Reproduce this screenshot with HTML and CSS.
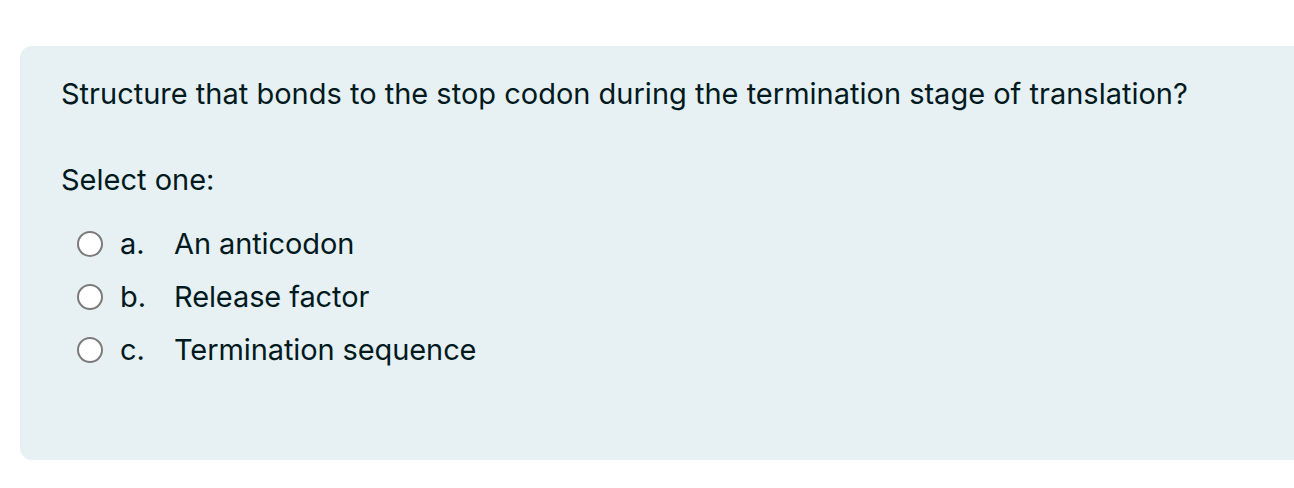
FILE: index.html
```html
<!DOCTYPE html>
<html lang="en">
<head>
    <meta charset="UTF-8">
    <title>Question</title>
    <link rel="stylesheet" href="styles.css">
</head>
<body>
    <div class="formulation">
        <div class="qtext">Structure that bonds to the stop codon during the termination stage of translation?</div>

        <div class="ablock">
            <div class="prompt">Select one:</div>
            <div class="answer">
                <label class="option">
                    <input type="radio" name="q1" value="0">
                    <span class="answernumber">a.</span>
                    <span class="answertext">An anticodon</span>
                </label>
                <label class="option">
                    <input type="radio" name="q1" value="1">
                    <span class="answernumber">b.</span>
                    <span class="answertext">Release factor</span>
                </label>
                <label class="option">
                    <input type="radio" name="q1" value="2">
                    <span class="answernumber">c.</span>
                    <span class="answertext">Termination sequence</span>
                </label>
            </div>
        </div>
    </div>
</body>
</html>
```

FILE: styles.css
```css
body {
    margin: 0;
    background-color: #fff;
    font-family: 'Inter', 'Noto Sans', sans-serif;
    color: #001a1e;
}
.formulation {
    margin: 46px 0 0 20px;
    height: 414px;
    box-sizing: border-box;
    padding: 22px 40px 0 41px;
    background-color: #e7f0f3;
    border-radius: 12px 0 0 12px;
    font-size: 29px;
}
.qtext {
    line-height: 52px;
}
.prompt {
    margin-top: 34px;
    line-height: 52px;
}
.answer {
    margin-top: 11px;
}
.option {
    display: flex;
    align-items: center;
    height: 53px;
    padding-left: 16px;
}
.option input {
    appearance: none;
    width: 26px;
    height: 26px;
    margin: 0 17px 0 0;
    border: 2px solid #7b7b7b;
    border-radius: 50%;
    background-color: #fff;
    box-sizing: border-box;
}
.answernumber {
    width: 54px;
}
.answertext {
    letter-spacing: -0.1px;
}
```
